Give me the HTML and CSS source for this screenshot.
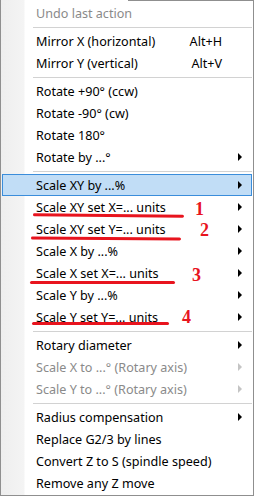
FILE: index.html
```html
<!DOCTYPE html>
<html lang="en">
<head>
    <meta charset="UTF-8">
    <meta name="viewport" content="width=device-width, initial-scale=1.0">
    <title>Transform menu</title>
    <link rel="stylesheet" href="styles.css">
</head>
<body>

<div class="menu">
    <div class="item disabled"><span class="label">Undo last action</span></div>
    <div class="sep"></div>

    <div class="item"><span class="label">Mirror X (horizontal)</span><span class="key">Alt+H</span></div>
    <div class="item"><span class="label">Mirror Y (vertical)</span><span class="key">Alt+V</span></div>
    <div class="sep"></div>

    <div class="item"><span class="label">Rotate +90° (ccw)</span></div>
    <div class="item"><span class="label">Rotate -90° (cw)</span></div>
    <div class="item"><span class="label">Rotate 180°</span></div>
    <div class="item"><span class="label">Rotate by ...°</span><span class="sub"></span></div>
    <div class="sep"></div>

    <div class="item hot"><span class="label">Scale XY by ...%</span><span class="sub"></span></div>
    <div class="item">
        <span class="label">Scale XY set X=... units</span><span class="sub"></span>
        <span class="note note-1"><i class="line"></i><b class="num">1</b></span>
    </div>
    <div class="item">
        <span class="label">Scale XY set Y=... units</span><span class="sub"></span>
        <span class="note note-2"><i class="line"></i><b class="num">2</b></span>
    </div>
    <div class="item"><span class="label">Scale X by ...%</span><span class="sub"></span></div>
    <div class="item">
        <span class="label">Scale X set X=... units</span><span class="sub"></span>
        <span class="note note-3"><i class="line"></i><b class="num">3</b></span>
    </div>
    <div class="item"><span class="label">Scale Y by ...%</span><span class="sub"></span></div>
    <div class="item">
        <span class="label">Scale Y set Y=... units</span><span class="sub"></span>
        <span class="note note-4"><i class="line"></i><b class="num">4</b></span>
    </div>
    <div class="sep"></div>

    <div class="item"><span class="label">Rotary diameter</span><span class="sub"></span></div>
    <div class="item disabled"><span class="label">Scale X to ...° (Rotary axis)</span><span class="sub"></span></div>
    <div class="item disabled"><span class="label">Scale Y to ...° (Rotary axis)</span><span class="sub"></span></div>
    <div class="sep"></div>

    <div class="item"><span class="label">Radius compensation</span><span class="sub"></span></div>
    <div class="item"><span class="label">Replace G2/3 by lines</span></div>
    <div class="item"><span class="label">Convert Z to S (spindle speed)</span></div>
    <div class="item"><span class="label">Remove any Z move</span></div>
</div>

</body>
</html>
```

FILE: styles.css
```css
body {
    margin: 0;
    padding: 0;
    background-color: #fff;
    font-family: "Noto Sans", "Open Sans", sans-serif;
    font-size: 12.6px;
    color: #000;
}
.menu {
    position: relative;
    width: 254px;
    height: 496px;
    box-sizing: border-box;
    padding: 2px 1px 1px 1px;
    border: 1px solid #8f8f8f;
    border-top: none;
    background: linear-gradient(to right, #eeeeee 0, #f4f4f4 23px, #fff 24px);
}
/* top edge only shows right of the parent menu */
.menu::before {
    content: "";
    position: absolute;
    top: 0;
    left: 127px;
    right: -1px;
    height: 1px;
    background-color: #8f8f8f;
}
.item {
    position: relative;
    display: flex;
    align-items: center;
    height: 22px;
    padding: 0 10px 0 34px;
    white-space: nowrap;
}
.item .label {
    flex: 1;
}
.item .key {
    margin-right: 20px;
}
.item.hot {
    background-color: #c1ddf6;
    box-shadow: inset 0 0 0 1px #3a8ddb;
}
.item.disabled {
    color: #8a8a8a;
}
.sub {
    width: 0;
    height: 0;
    border-left: 4px solid #000;
    border-top: 4px solid transparent;
    border-bottom: 4px solid transparent;
}
.item.disabled .sub {
    border-left-color: #c4c4c4;
}
.sep {
    height: 1px;
    margin: 3px 0 2px 31px;
    background-color: #d2d2d2;
}

/* red hand-drawn annotations */
.note {
    position: absolute;
    left: 0;
    top: 0;
}
.note .line {
    position: absolute;
    height: 3px;
    border-radius: 2px;
    background-color: #e8141e;
}
.note .num {
    position: absolute;
    font-family: "Liberation Serif", serif;
    font-size: 18px;
    font-weight: bold;
    line-height: 18px;
    color: #e8141e;
}
.note-1 .line { left: 31px; top: 18px; width: 151px; transform: rotate(0.6deg); }
.note-1 .num { left: 193px; top: 4px; }
.note-2 .line { left: 29px; top: 19px; width: 150px; transform: rotate(0.3deg); }
.note-2 .num { left: 198px; top: 3px; }
.note-3 .line { left: 28px; top: 19px; width: 145px; }
.note-3 .num { left: 190px; top: 4px; }
.note-4 .line { left: 30px; top: 16px; width: 137px; }
.note-4 .num { left: 180px; top: 2px; }
```
